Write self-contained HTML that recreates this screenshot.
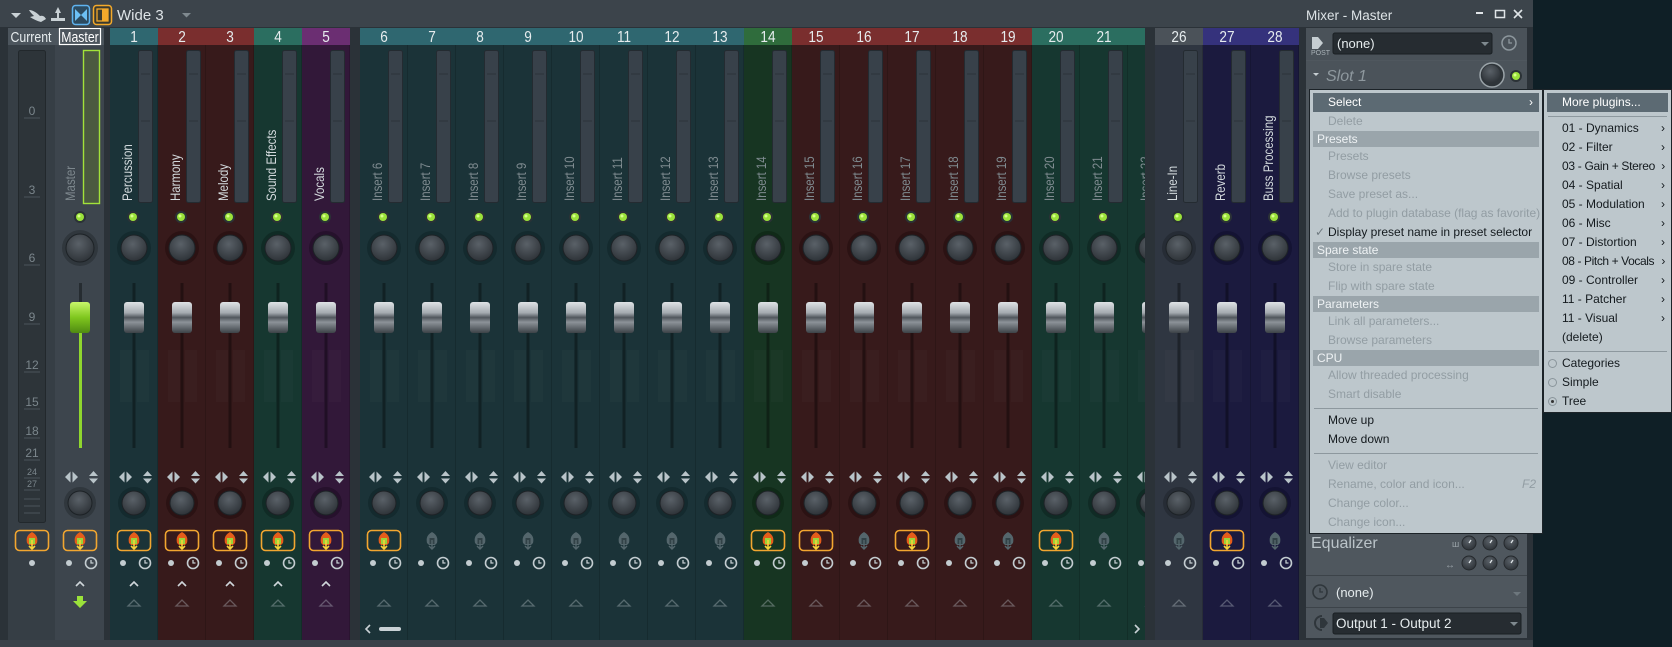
<!DOCTYPE html>
<html><head><meta charset="utf-8">
<style>
*{margin:0;padding:0;box-sizing:border-box}
body{width:1672px;height:647px;overflow:hidden;background:#0f1f26;font-family:"Liberation Sans",sans-serif;position:relative}
svg{position:absolute;left:0;top:0}
.hn{font-size:16px;fill:#e6ecee;text-anchor:middle}
.lab{font-size:14px}
.m{position:absolute;background:#bdc7cc;border:1px solid #1c2328;font-size:12px;color:#141a1e;overflow:hidden}
.m div{position:absolute;left:0;right:0;height:19px;line-height:19px;white-space:nowrap}
.hl{background:#5c6a73;color:#fff}
.dis{color:#929da3}
.sec{background:#9aa5ab;color:#eef2f4;height:16px!important;line-height:16px!important;left:3px!important;right:3px!important;padding-left:4px}
.sep{height:1px!important;background:#8d989e;left:4px!important;right:4px!important}
.ar{position:absolute;right:6px;top:0}
</style></head><body>
<svg id="sv" width="1672" height="647" xmlns="http://www.w3.org/2000/svg">
<defs>
<radialGradient id="kg" cx="0.45" cy="0.35" r="0.7"><stop offset="0" stop-color="#5a6168"/><stop offset="1" stop-color="#2b3035"/></radialGradient>
<linearGradient id="fg" x1="0" y1="0" x2="0" y2="1"><stop offset="0" stop-color="#dfe3e6"/><stop offset="0.35" stop-color="#a4aaaf"/><stop offset="0.5" stop-color="#50565c"/><stop offset="0.65" stop-color="#8c9298"/><stop offset="1" stop-color="#3c4247"/></linearGradient>
<linearGradient id="gg" x1="0" y1="0" x2="0" y2="1"><stop offset="0" stop-color="#c8f56a"/><stop offset="0.5" stop-color="#7fc71e"/><stop offset="1" stop-color="#4f8a12"/></linearGradient>
</defs>
<g id="g"></g>
</svg>

<div class="m" style="left:1309px;top:89px;width:234px;height:445px">
<div class="hl" style="top:3px;left:3px;right:3px;padding-left:15px">Select<span class="ar">›</span></div>
<div class="dis" style="top:22px;padding-left:18px">Delete</div>
<div class="sec" style="top:41px">Presets</div>
<div class="dis" style="top:57px;padding-left:18px">Presets</div>
<div class="dis" style="top:76px;padding-left:18px">Browse presets</div>
<div class="dis" style="top:95px;padding-left:18px">Save preset as...</div>
<div class="dis" style="top:114px;padding-left:18px">Add to plugin database (flag as favorite)</div>
<div style="top:133px;padding-left:18px"><span style="position:absolute;left:5px;color:#6f7a80">✓</span>Display preset name in preset selector</div>
<div class="sec" style="top:152px">Spare state</div>
<div class="dis" style="top:168px;padding-left:18px">Store in spare state</div>
<div class="dis" style="top:187px;padding-left:18px">Flip with spare state</div>
<div class="sec" style="top:206px">Parameters</div>
<div class="dis" style="top:222px;padding-left:18px">Link all parameters...</div>
<div class="dis" style="top:241px;padding-left:18px">Browse parameters</div>
<div class="sec" style="top:260px">CPU</div>
<div class="dis" style="top:276px;padding-left:18px">Allow threaded processing</div>
<div class="dis" style="top:295px;padding-left:18px">Smart disable</div>
<div class="sep" style="top:318px"></div>
<div style="top:321px;padding-left:18px">Move up</div>
<div style="top:340px;padding-left:18px">Move down</div>
<div class="sep" style="top:363px"></div>
<div class="dis" style="top:366px;padding-left:18px">View editor</div>
<div class="dis" style="top:385px;padding-left:18px">Rename, color and icon...<span class="ar" style="font-style:italic">F2</span></div>
<div class="dis" style="top:404px;padding-left:18px">Change color...</div>
<div class="dis" style="top:423px;padding-left:18px">Change icon...</div>
</div>

<div class="m" style="left:1543px;top:89px;width:129px;height:324px">
<div class="hl" style="top:3px;left:3px;right:3px;padding-left:15px">More plugins...</div>
<div class="sep" style="top:26px"></div>
<div style="top:29px;padding-left:18px">01 - Dynamics<span class="ar">›</span></div>
<div style="top:48px;padding-left:18px">02 - Filter<span class="ar">›</span></div>
<div style="top:67px;padding-left:18px;letter-spacing:-0.3px">03 - Gain + Stereo<span class="ar">›</span></div>
<div style="top:86px;padding-left:18px">04 - Spatial<span class="ar">›</span></div>
<div style="top:105px;padding-left:18px">05 - Modulation<span class="ar">›</span></div>
<div style="top:124px;padding-left:18px">06 - Misc<span class="ar">›</span></div>
<div style="top:143px;padding-left:18px">07 - Distortion<span class="ar">›</span></div>
<div style="top:162px;padding-left:18px;letter-spacing:-0.4px">08 - Pitch + Vocals<span class="ar">›</span></div>
<div style="top:181px;padding-left:18px">09 - Controller<span class="ar">›</span></div>
<div style="top:200px;padding-left:18px">11 - Patcher<span class="ar">›</span></div>
<div style="top:219px;padding-left:18px">11 - Visual<span class="ar">›</span></div>
<div style="top:238px;padding-left:18px">(delete)</div>
<div class="sep" style="top:261px"></div>
<div style="top:264px;padding-left:18px"><span style="position:absolute;left:4px;top:5px;width:9px;height:9px;border:1px solid #8a959b;border-radius:50%"></span>Categories</div>
<div style="top:283px;padding-left:18px"><span style="position:absolute;left:4px;top:5px;width:9px;height:9px;border:1px solid #8a959b;border-radius:50%"></span>Simple</div>
<div style="top:302px;padding-left:18px"><span style="position:absolute;left:4px;top:5px;width:9px;height:9px;border:1px solid #8a959b;border-radius:50%"></span><span style="position:absolute;left:7px;top:8px;width:3px;height:3px;background:#333;border-radius:50%"></span>Tree</div>
</div>

<script>
let s='';
const T=(x,y,t,a)=>s+=`<text x="${x}" y="${y}" ${a||''}>${t}</text>`;
s+=`<rect x="0" y="0" width="1533" height="27" fill="#3c444b"/>`;
s+=`<rect x="0" y="27" width="1300" height="620" fill="#2b3238"/>`;
s+=`<rect x="1300" y="27" width="233" height="620" fill="#2b3238"/>`;
s+=`<rect x="1533" y="0" width="139" height="647" fill="#0f1f26"/>`;
s+=`<path d="M11 13h10l-5 5z" fill="#c9d1d5"/>`;
s+=`<path d="M29 10c4 0 8 3 11 6 3-1 5 1 6 3l-5 3c-4-1-8-3-11-5l4-1c-2-2-4-4-5-6z" fill="#c9d1d5"/>`;
s+=`<path d="M58 7l-3 6h2v5h-6v3h14v-3h-6v-5h2z" fill="#c9d1d5"/>`;
s+=`<rect x="72.5" y="5.5" width="17" height="19" rx="3" fill="#2d4b60" stroke="#5fb3ef" stroke-width="1.5"/><path d="M75 9l6 6-6 6zM87 9l-6 6 6 6z" fill="#6cc0f5"/>`;
s+=`<rect x="93.5" y="5.5" width="18" height="19" rx="3" fill="#3b3a2f" stroke="#f4a92b" stroke-width="1.5"/><rect x="97" y="9" width="11" height="12" fill="none" stroke="#f4a92b" stroke-width="1.3"/><rect x="102" y="9" width="6" height="12" fill="#f4a92b"/>`;
T(117,20,'Wide 3','font-size="15" fill="#dde3e6"');
s+=`<path d="M182 13h9l-4.5 4.5z" fill="#7f898f"/>`;
T(1306,20,'Mixer - Master','font-size="13.5" fill="#dde3e6"');
s+=`<rect x="1476" y="12" width="7" height="2" fill="#e0e5e8"/><rect x="1495.5" y="10.5" width="9" height="7" fill="none" stroke="#e0e5e8" stroke-width="1.5"/><path d="M1514 10l8 8M1522 10l-8 8" stroke="#e0e5e8" stroke-width="1.6"/>`;

s+=`<rect x="8" y="28" width="47" height="612" fill="#363e45"/>`;
s+=`<rect x="55" y="28" width="49" height="612" fill="#3d454d"/>`;
s+=`<rect x="8" y="28" width="96" height="17" fill="#4c555d"/>`;
T(31,42,'Current','font-size="15" fill="#e6ecee" text-anchor="middle" transform="translate(31 0) scale(0.82 1) translate(-31 0)"');
s+=`<rect x="59.5" y="28.5" width="41" height="16" fill="none" stroke="#fff" stroke-width="1.2"/>`;
T(80,42,'Master','font-size="15" fill="#fff" text-anchor="middle" transform="translate(80 0) scale(0.82 1) translate(-80 0)"');
s+=`<rect x="18.5" y="50.5" width="27" height="472" rx="2" fill="#2d3439" stroke="#22282c"/>`;
[[0,115],[3,194],[6,262],[9,321],[12,369],[15,406],[18,435],[21,457],[24,475],[27,487]].forEach(([v,y])=>{
 const f=v>=24?9:12; T(32,y,v,`font-size="${f}" fill="#7b868c" text-anchor="middle"`);
 s+=`<line x1="24" x2="40" y1="${y+3}" y2="${y+3}" stroke="#4a535a"/>`;});
[499,506,513].forEach(y=>s+=`<line x1="24" x2="40" y1="${y}" y2="${y}" stroke="#4a535a"/>`);

function knob(cx,cy,r,ring){s+=`<circle cx="${cx}" cy="${cy}" r="${r+4}" fill="${ring}"/><circle cx="${cx}" cy="${cy}" r="${r}" fill="url(#kg)" stroke="#1d2226"/>`;}
function arrows(x,y,c){
 s+=`<path d="M${x-9.5} ${y-5.5}v11l-5.5-5.5zM${x-7.5} ${y-5.5}v11l5.5-5.5z" fill="${c}"/>`;
 s+=`<path d="M${x+9} ${y-1}l4.5-5 4.5 5zM${x+9} ${y+1.5}l4.5 5 4.5-5z" fill="${c}"/>`;}
function fx(x,y,on,col){ if(on){s+=`<rect x="${x-16.5}" y="${y-9.5}" width="33" height="20" rx="4" fill="none" stroke="#f2a630" stroke-width="1.6"/>`;
 s+=`<path d="M${x} ${y-8}c-5 3-6 6-5 11l2 2h6l2-2c1-5 0-8-5-11z" fill="#e55d1a"/><rect x="${x-3}" y="${y-2}" width="6" height="6" fill="#9bd43a"/><path d="M${x} ${y}v9M${x-3} ${y+6}l3 3 3-3" stroke="#f7d23a" stroke-width="1.6" fill="none"/>`;}
 else{s+=`<path d="M${x} ${y-8}c-5 3-6 6-5 11l2 2h6l2-2c1-5 0-8-5-11z" fill="${col}"/><rect x="${x-2.5}" y="${y-2}" width="5" height="6" fill="#1c2a2e" opacity=".6"/><path d="M${x} ${y}v9M${x-3} ${y+6}l3 3 3-3" stroke="${col}" stroke-width="1.4" fill="none"/>`;}}
function clock(x,y){s+=`<circle cx="${x}" cy="${y}" r="5.5" fill="none" stroke="#c3ccd0" stroke-width="1.6"/><path d="M${x} ${y-3}v3h2.5" stroke="#c3ccd0" stroke-width="1.3" fill="none"/>`;}
function led(x,y){s+=`<circle cx="${x}" cy="${y}" r="6" fill="#2b3236"/><circle cx="${x}" cy="${y}" r="4" fill="#9be23a"/><circle cx="${x-1}" cy="${y-1}" r="1.5" fill="#d6ff8a"/>`;}

s+=`<rect x="83.5" y="50.5" width="16" height="153" fill="#4b5a40" stroke="#a2e23a" stroke-width="1.4"/>`;
T(0,0,'Master','class="lab" fill="#7d878d" transform="translate(75 201) rotate(-90) scale(0.82 1)"');
led(80,217); knob(80,248,14,'#30373d');
s+=`<rect x="79" y="283" width="3" height="20" fill="#262c31"/><rect x="79" y="333" width="3" height="115" fill="#8fd62e"/>`;
s+=`<rect x="70" y="302" width="20" height="31" rx="3" fill="url(#gg)"/>`;
arrows(80,477,'#b9c4c9'); knob(80,503,12,'#30373d');
fx(32,540,true); fx(80,540,true);
s+=`<circle cx="32" cy="563" r="3" fill="#c3ccd0"/><circle cx="69" cy="563" r="3" fill="#c3ccd0"/>`; clock(91,563);
s+=`<path d="M76 586l4-4 4 4" stroke="#cfd6da" stroke-width="1.6" fill="none"/><path d="M77 596h6v5h4l-7 7-7-7h4z" fill="#9be23a"/>`;

function ch(L,num,hdr,body,ring,label,dim,on,caret){
 s+=`<rect x="${L}" y="45" width="48" height="595" fill="${body}"/>`;
 s+=`<rect x="${L}" y="28" width="48" height="17" fill="${hdr}"/>`;
 s+=`<rect x="${L+47}" y="45" width="1" height="595" fill="rgba(0,0,0,0.15)"/>`;
 T(L+24,42,num,`class="hn" transform="translate(${L+24} 0) scale(0.85 1) translate(${-L-24} 0)"`);
 s+=`<rect x="${L+28.5}" y="50.5" width="14" height="152" rx="2" fill="#38414a" stroke="#242b31"/>`;
 s+=`<line x1="${L+31}" x2="${L+40}" y1="74" y2="74" stroke="#2c343a"/><line x1="${L+31}" x2="${L+40}" y1="121" y2="121" stroke="#2c343a"/>`;
 T(0,0,label,`class="lab" fill="${dim?'#7f8b90':'#d3dadd'}" transform="translate(${L+22} 201) rotate(-90) scale(0.82 1)"`);
 led(L+23,217); knob(L+24,248,13,ring);
 s+=`<rect x="${L+22.5}" y="283" width="3" height="165" fill="rgba(0,0,0,0.35)"/>`;
 s+=`<rect x="${L+10}" y="350" width="12" height="52" fill="rgba(255,255,255,0.02)"/><rect x="${L+27}" y="350" width="12" height="52" fill="rgba(255,255,255,0.02)"/>`;
 s+=`<rect x="${L+14}" y="302" width="20" height="31" rx="3" fill="url(#fg)"/>`;
 arrows(L+24,477,'#b9c4c9'); knob(L+24,503,12,ring);
 fx(L+24,540,on,'#54666c');
 s+=`<circle cx="${L+13}" cy="563" r="3" fill="#c3ccd0"/>`; clock(L+35,563);
 if(caret) s+=`<path d="M${L+20} 586l4-4 4 4" stroke="#cfd6da" stroke-width="1.6" fill="none"/>`;
 s+=`<path d="M${L+18} 606l6-6 6 6z" fill="none" stroke="rgba(200,210,215,0.35)" stroke-width="1.3"/>`;
}
const TE=['#2f6770','#1b3338','#142a2e'], RD=['#7a2e2e','#371a1b','#2b1213'], GR=['#2b6e60','#163730','#102b25'],
 PU=['#6b2e72','#321839','#26112c'], G14=['#2f6c3c','#173522','#102a18'], GY=['#4b5259','#2f3641','#262c35'], NV=['#35327c','#1b1a3e','#141333'];
const c1=[[1,TE,'Percussion'],[2,RD,'Harmony'],[3,RD,'Melody'],[4,GR,'Sound Effects'],[5,PU,'Vocals']];
c1.forEach((c,i)=>ch(110+i*48,c[0],c[1][0],c[1][1],c[1][2],c[2],0,1,1));
s+=`<rect x="350" y="28" width="10" height="612" fill="#2b3238"/>`;
s+=`<g clip-path="url(#cp)">`;
const fxOn=[6,14,15,17,20];
for(let n=6;n<=22;n++){let col=n<=13?TE:n==14?G14:n<=19?RD:GR; ch(360+(n-6)*48,n,col[0],col[1],col[2],'Insert '+n,1,fxOn.includes(n),0);}
s+=`</g>`;
s+=`<defs><clipPath id="cp"><rect x="360" y="0" width="785" height="647"/></clipPath></defs>`;
s+=`<rect x="1145" y="28" width="10" height="612" fill="#2b3238"/>`;
ch(1155,26,GY[0],GY[1],GY[2],'Line-In',0,0,0);
ch(1203,27,NV[0],NV[1],NV[2],'Reverb',0,1,0);
ch(1251,28,NV[0],NV[1],NV[2],'Buss Processing',0,0,0);
s+=`<rect x="1299" y="28" width="7" height="612" fill="#2b3238"/>`;
s+=`<path d="M370 625l-4 4 4 4" stroke="#c9d1d5" stroke-width="1.6" fill="none"/><rect x="379" y="627" width="22" height="4" rx="2" fill="#c9d1d5"/><path d="M1135 625l4 4-4 4" stroke="#c9d1d5" stroke-width="1.6" fill="none"/>`;
s+=`<rect x="0" y="640" width="1533" height="7" fill="#3a4249"/>`;
s+=`<rect x="1306" y="28" width="221" height="610" fill="#4f575e"/>`;
s+=`<rect x="1306" y="28" width="221" height="32" fill="#4a5259"/>`;
s+=`<path d="M1312 37h6l5 6-5 6h-6z" fill="#c6ced2"/>`; T(1311,55,'POST','font-size="7" fill="#a8b1b6"');
s+=`<rect x="1333" y="33" width="159" height="21" rx="2" fill="#262c31" stroke="#1a1f23"/>`;
T(1337,48,'(none)','font-size="13" fill="#e6ecee"'); s+=`<path d="M1481 42h8l-4 4z" fill="#7f898f"/>`;
s+=`<circle cx="1509" cy="43" r="7" fill="none" stroke="#8d979d" stroke-width="1.5"/><path d="M1509 39v4h3" stroke="#8d979d" stroke-width="1.3" fill="none"/>`;
s+=`<rect x="1306" y="61" width="221" height="28" fill="#4b535a"/>`;
s+=`<path d="M1313 73h6l-3 3z" fill="#c6ced2"/>`; T(1326,81,'Slot 1','font-size="16" font-style="italic" fill="#8e989e"');
s+=`<circle cx="1492" cy="75" r="12" fill="#2e3439" stroke="#9aa3a8" stroke-width="1.5"/><circle cx="1491" cy="74" r="9" fill="url(#kg)"/>`; led(1516,76);
T(1311,548,'Equalizer','font-size="16" fill="#bac3c8"');
s+=`<text x="1452" y="547" font-size="9" fill="#9aa3a8">ш</text><text x="1445" y="568" font-size="10" fill="#9aa3a8">↔</text>`;
[[1469,543],[1490,543],[1511,543],[1469,563],[1490,563],[1511,563]].forEach(([x,y])=>s+=`<circle cx="${x}" cy="${y}" r="7" fill="url(#kg)" stroke="#25292d"/><line x1="${x}" y1="${y}" x2="${x+2}" y2="${y-3}" stroke="#e0e5e8" stroke-width="1.3"/>`);
s+=`<line x1="1306" x2="1527" y1="575.5" y2="575.5" stroke="#3c4349"/><line x1="1306" x2="1527" y1="607.5" y2="607.5" stroke="#3c4349"/>`;
s+=`<circle cx="1320" cy="592" r="7" fill="none" stroke="#2f363b" stroke-width="1.6"/><path d="M1320 588v4h3" stroke="#2f363b" stroke-width="1.3" fill="none"/>`;
T(1336,597,'(none)','font-size="13" fill="#e6ecee"'); s+=`<path d="M1513 592h8l-4 4z" fill="#6d777d"/>`;
s+=`<path d="M1322 616a7 7 0 0 0 0 14" stroke="#2f363b" stroke-width="2" fill="none"/><path d="M1320 618h4l4 5-4 5h-4z" fill="#2f363b"/>`;
s+=`<rect x="1333" y="613" width="188" height="21" rx="2" fill="#262c31" stroke="#1a1f23"/>`;
T(1336,628,'Output 1 - Output 2','font-size="13.5" fill="#e6ecee"'); s+=`<path d="M1510 622h8l-4 4z" fill="#7f898f"/>`;
document.getElementById('g').innerHTML=s;
</script>
</body></html>
